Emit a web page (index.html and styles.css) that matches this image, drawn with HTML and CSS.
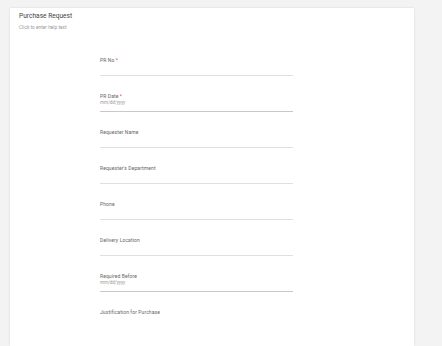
FILE: index.html
```html
<!DOCTYPE html>
<html lang="en">
<head>
    <meta charset="UTF-8">
    <meta name="viewport" content="width=device-width, initial-scale=1.0">
    <title>Purchase Request</title>
    <link rel="stylesheet" href="styles.css">
</head>
<body>
    <div id="form-card">
        <div id="form-header">
            <div class="form-title">Purchase Request</div>
            <div class="form-help">Click to enter help text</div>
        </div>
        <div id="field-container">
            <div class="field">
                <div class="field-label">PR No <span class="required">*</span></div>
                <div class="field-input"></div>
            </div>
            <div class="field">
                <div class="field-label">PR Date <span class="required">*</span></div>
                <div class="field-input date">mm/dd/yyyy</div>
            </div>
            <div class="field">
                <div class="field-label">Requester Name</div>
                <div class="field-input"></div>
            </div>
            <div class="field">
                <div class="field-label">Requester's Department</div>
                <div class="field-input"></div>
            </div>
            <div class="field">
                <div class="field-label">Phone</div>
                <div class="field-input"></div>
            </div>
            <div class="field">
                <div class="field-label">Delivery Location</div>
                <div class="field-input"></div>
            </div>
            <div class="field">
                <div class="field-label">Required Before</div>
                <div class="field-input date">mm/dd/yyyy</div>
            </div>
            <div class="field">
                <div class="field-label">Justification for Purchase</div>
                <!-- textarea, its bottom line is below the fold -->
                <div class="field-input textarea"></div>
            </div>
        </div>
    </div>
</body>
</html>
```

FILE: styles.css
```css
body {
    margin: 0;
    background-color: #f3f3f3;
    font-family: Roboto, "Liberation Sans", sans-serif;
    height: 346px;
    overflow: hidden;
}

#form-card {
    margin: 8px 28px 0 10px;
    background-color: #fff;
    box-shadow: 0 0 2px rgba(0, 0, 0, 0.12);
    height: 338px;
    overflow: hidden;
}

#form-header {
    padding: 3px 9px 0 9px;
}
.form-title {
    font-size: 6.6px;
    line-height: 10px;
    color: #444;
}
.form-help {
    margin-top: 2.5px;
    font-size: 4.8px;
    line-height: 7px;
    color: #9a9a9a;
}

#field-container {
    margin-left: 90px;
    width: 193px;
    padding-top: 9.5px;
}
.field {
    padding-top: 17px;
}
.field-label {
    font-size: 5px;
    line-height: 7px;
    color: #666;
    letter-spacing: 0.1px;
}
.required {
    color: #e53935;
}
.field-input {
    height: 11px;
    border-bottom: 1px solid #e0e0e0;
}
.field-input.date {
    font-size: 4.5px;
    line-height: 5px;
    color: #999;
    border-bottom-color: #c8c8c8;
}
.field-input.textarea {
    height: 60px;
}
```
